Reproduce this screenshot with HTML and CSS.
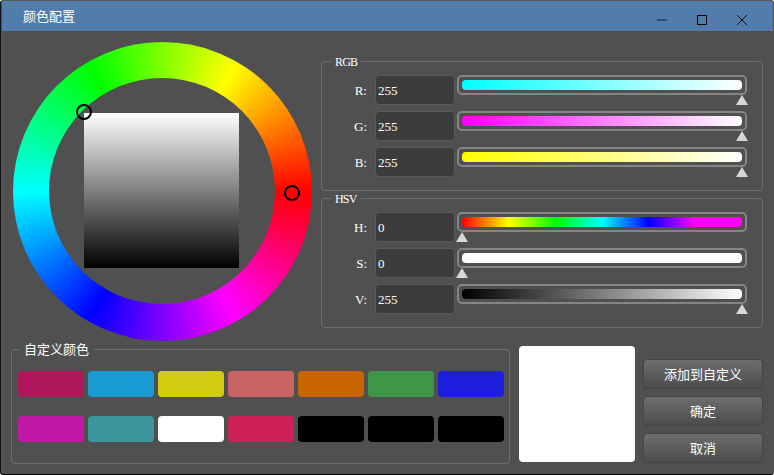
FILE: index.html
```html
<!DOCTYPE html>
<html lang="zh-CN">
<head>
    <meta charset="UTF-8">
    <meta name="viewport" content="width=device-width, initial-scale=1.0">
    <title>颜色配置</title>
    <link rel="stylesheet" href="styles.css">
</head>
<body>
<div class="window">
    <div class="titlebar">
        <span class="title">颜色配置</span>
        <div class="win-buttons">
            <button class="win-btn" aria-label="minimize">
                <svg width="12" height="12" viewBox="0 0 12 12"><path d="M1 6h10" stroke="#2f4f78" stroke-width="2" fill="none"/></svg>
            </button>
            <button class="win-btn" aria-label="maximize">
                <svg width="12" height="12" viewBox="0 0 12 12"><path d="M1.5 1.5h9v9h-9z" stroke="#000" stroke-width="1" fill="none"/></svg>
            </button>
            <button class="win-btn" aria-label="close">
                <svg width="12" height="12" viewBox="0 0 12 12"><path d="M1 1l10 10M11 1L1 11" stroke="#111" stroke-width="1" fill="none"/></svg>
            </button>
        </div>
    </div>

    <div class="main">
        <!-- Hue wheel -->
        <div class="wheel">
            <div class="wheel-hole">
                <div class="sv-square"></div>
            </div>
            <span class="marker marker-sv"></span>
            <span class="marker marker-hue"></span>
        </div>

        <div class="panels">
            <div class="group panel">
                <span class="legend legend-latin">RGB</span>
                <div class="row">
                    <label class="row-label">R:</label>
                    <input class="value" type="text" value="255">
                    <div class="slider"><div class="fill fill-r"><span class="thumb" style="left: 100%"></span></div></div>
                </div>
                <div class="row">
                    <label class="row-label">G:</label>
                    <input class="value" type="text" value="255">
                    <div class="slider"><div class="fill fill-g"><span class="thumb" style="left: 100%"></span></div></div>
                </div>
                <div class="row">
                    <label class="row-label">B:</label>
                    <input class="value" type="text" value="255">
                    <div class="slider"><div class="fill fill-b"><span class="thumb" style="left: 100%"></span></div></div>
                </div>
            </div>

            <div class="group panel">
                <span class="legend legend-latin">HSV</span>
                <div class="row">
                    <label class="row-label">H:</label>
                    <input class="value" type="text" value="0">
                    <div class="slider"><div class="fill fill-h"><span class="thumb" style="left: 0%"></span></div></div>
                </div>
                <div class="row">
                    <label class="row-label">S:</label>
                    <input class="value" type="text" value="0">
                    <div class="slider"><div class="fill fill-s"><span class="thumb" style="left: 0%"></span></div></div>
                </div>
                <div class="row">
                    <label class="row-label">V:</label>
                    <input class="value" type="text" value="255">
                    <div class="slider"><div class="fill fill-v"><span class="thumb" style="left: 100%"></span></div></div>
                </div>
            </div>
        </div>
    </div>

    <div class="bottom">
        <div class="group custom">
            <span class="legend legend-cjk">自定义颜色</span>
            <div class="swatches">
                <div class="swatch c1"></div>
                <div class="swatch c2"></div>
                <div class="swatch c3"></div>
                <div class="swatch c4"></div>
                <div class="swatch c5"></div>
                <div class="swatch c6"></div>
                <div class="swatch c7"></div>
                <div class="swatch c8"></div>
                <div class="swatch c9"></div>
                <div class="swatch c10"></div>
                <div class="swatch c11"></div>
                <div class="swatch c12"></div>
                <div class="swatch c12"></div>
                <div class="swatch c12"></div>
            </div>
        </div>
        <div class="preview"></div>
        <div class="actions">
            <button class="btn">添加到自定义</button>
            <button class="btn">确定</button>
            <button class="btn">取消</button>
        </div>
    </div>
</div>
</body>
</html>
```

FILE: styles.css
```css
* {
    box-sizing: border-box;
}
html, body {
    margin: 0;
    background-color: #fff;
}
body {
    font-family: "Noto Sans CJK SC", "Liberation Sans", sans-serif;
    font-size: 13px;
    color: #fff;
}
.window {
    display: flex;
    flex-direction: column;
    width: 774px;
    height: 475px;
    overflow: hidden;
    background-color: #505050;
    border-top: 1px solid #5a5a5a;
    border-left: 1px solid #141414;
    border-bottom: 1px solid #000;
    border-radius: 3px;
}
.titlebar {
    display: flex;
    align-items: center;
    justify-content: space-between;
    height: 30px;
    margin: 0 1px 0 1px;
    background-color: #527cab;
    border-top-right-radius: 3px;
}
.title {
    margin-left: 21px;
    line-height: 30px;
}
.win-buttons {
    display: flex;
    margin-right: 11px;
}
.win-btn {
    display: flex;
    align-items: center;
    justify-content: center;
    width: 40px;
    height: 30px;
    padding: 8px 0 0;
    border: none;
    background: none;
}
.main {
    display: flex;
    padding: 11px 0 0 12px;
}
.wheel {
    position: relative;
    display: flex;
    align-items: center;
    justify-content: center;
    flex: none;
    width: 299px;
    height: 299px;
    border-radius: 50%;
    background: conic-gradient(from 90deg, #f00, #f0f 60deg, #00f 120deg, #0ff 180deg, #0f0 240deg, #ff0 300deg, #f00 360deg);
}
.wheel-hole {
    display: flex;
    align-items: center;
    justify-content: center;
    width: 226px;
    height: 226px;
    margin: -1px 0 0 -1px;
    border-radius: 50%;
    background-color: #505050;
}
.sv-square {
    width: 155px;
    height: 155px;
    margin: -2px 0 0 -2px;
    background: linear-gradient(#fff, #000);
}
.marker {
    position: absolute;
    width: 16px;
    height: 16px;
    border: 2px solid #000;
    border-radius: 50%;
}
.marker-sv {
    left: 63px;
    top: 62px;
}
.marker-hue {
    left: 271px;
    top: 143px;
}
.panels {
    display: flex;
    flex-direction: column;
    gap: 7px;
    margin: 19px 0 0 9px;
    width: 442px;
}
.group {
    position: relative;
    border: 1px solid #6f6f6f;
    border-radius: 4px;
}
.panel {
    height: 130px;
    padding-top: 13px;
    display: flex;
    flex-direction: column;
    gap: 6px;
}
.legend {
    position: absolute;
    height: 16px;
    line-height: 16px;
    background-color: #505050;
}
.legend-latin {
    left: 9px;
    top: -8px;
    padding: 0 4px;
    font-family: "Liberation Serif", serif;
    font-size: 12px;
    letter-spacing: -0.8px;
}
.legend-cjk {
    left: 7px;
    top: -9px;
    padding: 0 5px;
}
.row {
    display: flex;
    height: 30px;
}
.row-label {
    width: 45px;
    margin-right: 8px;
    padding-top: 1px;
    font-family: "Liberation Serif", serif;
    font-size: 13px;
    line-height: 30px;
    text-align: right;
}
.value {
    width: 80px;
    height: 30px;
    padding: 1px 3px 0 2px;
    font-family: "Liberation Serif", serif;
    font-size: 13px;
    color: #fff;
    background-color: #3c3c3c;
    border: 1px solid #5a5a5a;
    border-radius: 4px;
    outline: none;
}
.slider {
    width: 290px;
    height: 20px;
    margin-left: 2px;
    padding: 3px;
    border: 2px solid #858585;
    border-radius: 5px;
}
.fill {
    position: relative;
    height: 10px;
    border-radius: 4px;
}
.fill-r { background: linear-gradient(90deg, #0ff, #fff); }
.fill-g { background: linear-gradient(90deg, #f0f, #fff); }
.fill-b { background: linear-gradient(90deg, #ff0, #fff); }
.fill-h { background: linear-gradient(90deg, #f00, #ff0 16.67%, #0f0 33.33%, #0ff 50%, #00f 66.67%, #f0f 83.33%, #f0f); }
.fill-s { background: #fff; }
.fill-v { background: linear-gradient(90deg, #000, #fff); }
.thumb {
    position: absolute;
    top: 15px;
    width: 12px;
    height: 10px;
    margin-left: -6px;
    background-color: #d6d6d6;
    clip-path: polygon(50% 0, 100% 100%, 0 100%);
}
.bottom {
    display: flex;
    margin-top: 5px;
    padding-left: 10px;
}
.custom {
    width: 499px;
    height: 115px;
    margin-top: 3px;
    padding: 21px 0 0 6px;
}
.swatches {
    display: grid;
    grid-template-columns: repeat(7, 66px);
    grid-auto-rows: 26px;
    column-gap: 4px;
    row-gap: 19px;
}
.swatch {
    border-radius: 4px;
}
.c1 { background-color: #ae1759; }
.c2 { background-color: #1a9cd2; }
.c3 { background-color: #d2cc10; }
.c4 { background-color: #c86464; }
.c5 { background-color: #c86400; }
.c6 { background-color: #409648; }
.c7 { background-color: #1e1edc; }
.c8 { background-color: #c019a8; }
.c9 { background-color: #3c969b; }
.c10 { background-color: #fff; }
.c11 { background-color: #cd2055; }
.c12 { background-color: #000; }
.preview {
    width: 116px;
    height: 116px;
    margin-left: 9px;
    background-color: #fff;
    border-radius: 4px;
}
.actions {
    display: flex;
    flex-direction: column;
    gap: 7px;
    width: 120px;
    margin: 13px 0 0 8px;
}
.btn {
    height: 30px;
    padding: 0 0 2px;
    font: inherit;
    color: #fff;
    background: linear-gradient(#6e6e6e, #4c4c4c);
    border: 1px solid #444;
    border-radius: 4px;
}
```
